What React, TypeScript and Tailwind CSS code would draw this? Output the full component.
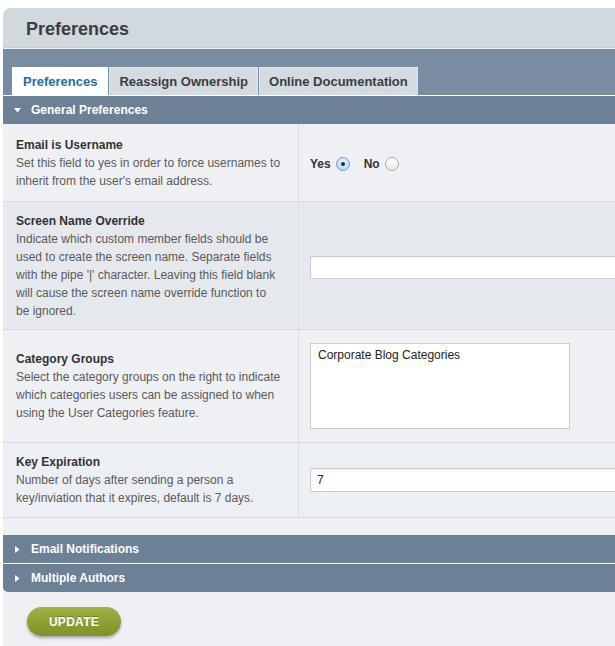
import React, { useState } from 'react';

const font = { fontFamily: '"Liberation Sans", Arial, sans-serif' };

type Row = {
  title: string;
  desc: string;
  height: string;
  bg: string;
  field: React.ReactNode;
};

const Radio: React.FC<{ checked: boolean; onClick: () => void }> = ({ checked, onClick }) => (
  <span
    onClick={onClick}
    className={`inline-flex h-[14px] w-[14px] cursor-pointer items-center justify-center rounded-full border ${
      checked
        ? 'border-[#6d9fd6] bg-[radial-gradient(circle_at_50%_35%,#eaf4ff,#a9cdf2)]'
        : 'border-[#a9a9a9] bg-[linear-gradient(#ffffff,#e9e9e9)]'
    }`}
  >
    {checked && <span className="h-[4px] w-[4px] rounded-full bg-[#1d2f45]" />}
  </span>
);

const SectionBar: React.FC<{ label: string; open?: boolean; rounded?: boolean }> = ({
  label,
  open,
  rounded,
}) => (
  <div
    className={`flex h-[28px] items-center bg-[#6c8096] pl-[11px] text-[12px] font-bold text-white ${
      rounded ? 'rounded-bl-[5px]' : ''
    }`}
  >
    {open ? (
      <svg width="7" height="5" viewBox="0 0 7 5" className="mr-[10px]">
        <path d="M0 0 L7 0 L3.5 4.5 Z" fill="#ffffff" />
      </svg>
    ) : (
      <svg width="5" height="7" viewBox="0 0 5 7" className="ml-[1px] mr-[11px]">
        <path d="M0 0 L4.5 3.5 L0 7 Z" fill="#ffffff" />
      </svg>
    )}
    {label}
  </div>
);

export default function App() {
  const [emailUser, setEmailUser] = useState(true);
  const [tab, setTab] = useState('Preferences');

  const rows: Row[] = [
    {
      title: 'Email is Username',
      desc: "Set this field to yes in order to force usernames to inherit from the user's email address.",
      height: 'h-[78px]',
      bg: 'bg-[#eef0f4]',
      field: (
        <div className="flex items-center pt-[2px] text-[12px] font-bold text-[#333]">
          <span className="mr-[5px]">Yes</span>
          <Radio checked={emailUser} onClick={() => setEmailUser(true)} />
          <span className="ml-[14px] mr-[5px]">No</span>
          <Radio checked={!emailUser} onClick={() => setEmailUser(false)} />
        </div>
      ),
    },
    {
      title: 'Screen Name Override',
      desc: "Indicate which custom member fields should be used to create the screen name. Separate fields with the pipe '|' character. Leaving this field blank will cause the screen name override function to be ignored.",
      height: 'h-[128px]',
      bg: 'bg-[#e5e9ee]',
      field: (
        <input className="mt-[4px] h-[23px] w-[330px] border border-[#c9cdd2] bg-white px-[6px] text-[12px] shadow-[inset_0_1px_2px_rgba(0,0,0,0.08)] outline-none" />
      ),
    },
    {
      title: 'Category Groups',
      desc: 'Select the category groups on the right to indicate which categories users can be assigned to when using the User Categories feature.',
      height: 'h-[113px]',
      bg: 'bg-[#eef0f4]',
      field: (
        <div className="h-[86px] w-[260px] border border-[#c9cdd2] bg-white px-[7px] py-[4px] text-[12px] leading-[15px] text-[#222]">
          Corporate Blog Categories
        </div>
      ),
    },
    {
      title: 'Key Expiration',
      desc: 'Number of days after sending a person a key/inviation that it expires, default is 7 days.',
      height: 'h-[75px]',
      bg: 'bg-[#eceff3]',
      field: (
        <input
          defaultValue="7"
          className="h-[24px] w-[330px] border border-[#c9cdd2] bg-white px-[6px] text-[12px] text-[#222] shadow-[inset_0_1px_2px_rgba(0,0,0,0.08)] outline-none"
        />
      ),
    },
  ];

  const tabs = ['Preferences', 'Reassign Ownership', 'Online Documentation'];

  return (
    <div className="h-[646px] w-[615px] overflow-hidden bg-white pl-[3px] pt-[8px]" style={font}>
      <div className="flex min-h-[700px] w-[640px] flex-col rounded-tl-[8px] bg-[#eef0f3]">
        {/* header */}
        <div className="flex h-[40px] items-center rounded-tl-[8px] border-b border-[#c6ced5] bg-[#d1d8de] pl-[23px] pt-[3px] text-[18px] font-bold text-[#3a3d40]">
          Preferences
        </div>
        <div className="h-[1px] bg-[#eef1f4]" />

        {/* tabs */}
        <div className="flex h-[46px] items-end gap-[1px] bg-[#798ca0] pl-[9px]">
          {tabs.map((t) => (
            <button
              key={t}
              onClick={() => setTab(t)}
              className={`h-[28px] pt-[1px] text-[13px] font-bold ${
                tab === t
                  ? 'bg-white px-[11px] text-[#2b6aa3]'
                  : 'border-x border-t border-[#e2e7eb] bg-[#d3dae0] px-[9px] text-[#3a3d40]'
              }`}
            >
              {t}
            </button>
          ))}
        </div>
        <div className="h-[1px] bg-white" />

        <SectionBar label="General Preferences" open />

        {/* rows */}
        {rows.map((r) => (
          <div key={r.title} className={`flex ${r.height} border-b border-[#d5dae0] ${r.bg}`}>
            <div className="flex w-[296px] flex-col justify-center border-r border-[#dadee3] pl-[13px] pr-[16px] text-[12px] leading-[18px]">
              <div className="font-bold text-[#333]">{r.title}</div>
              <div className="text-[#5a5a5a]">{r.desc}</div>
            </div>
            <div className="flex flex-1 items-center pl-[11px]">{r.field}</div>
          </div>
        ))}

        <div className="h-[17px]" />
        <SectionBar label="Email Notifications" />
        <div className="h-[1px] bg-white" />
        <SectionBar label="Multiple Authors" rounded />

        <div className="pl-[24px] pt-[15px]">
          <button className="h-[29px] w-[94px] rounded-full bg-[linear-gradient(#9fb243,#7d9128)] text-[12px] font-bold tracking-[0.3px] text-white shadow-[0_2px_3px_rgba(0,0,0,0.3)] [text-shadow:0_-1px_0_rgba(0,0,0,0.25)]">
            UPDATE
          </button>
        </div>
      </div>
    </div>
  );
}
